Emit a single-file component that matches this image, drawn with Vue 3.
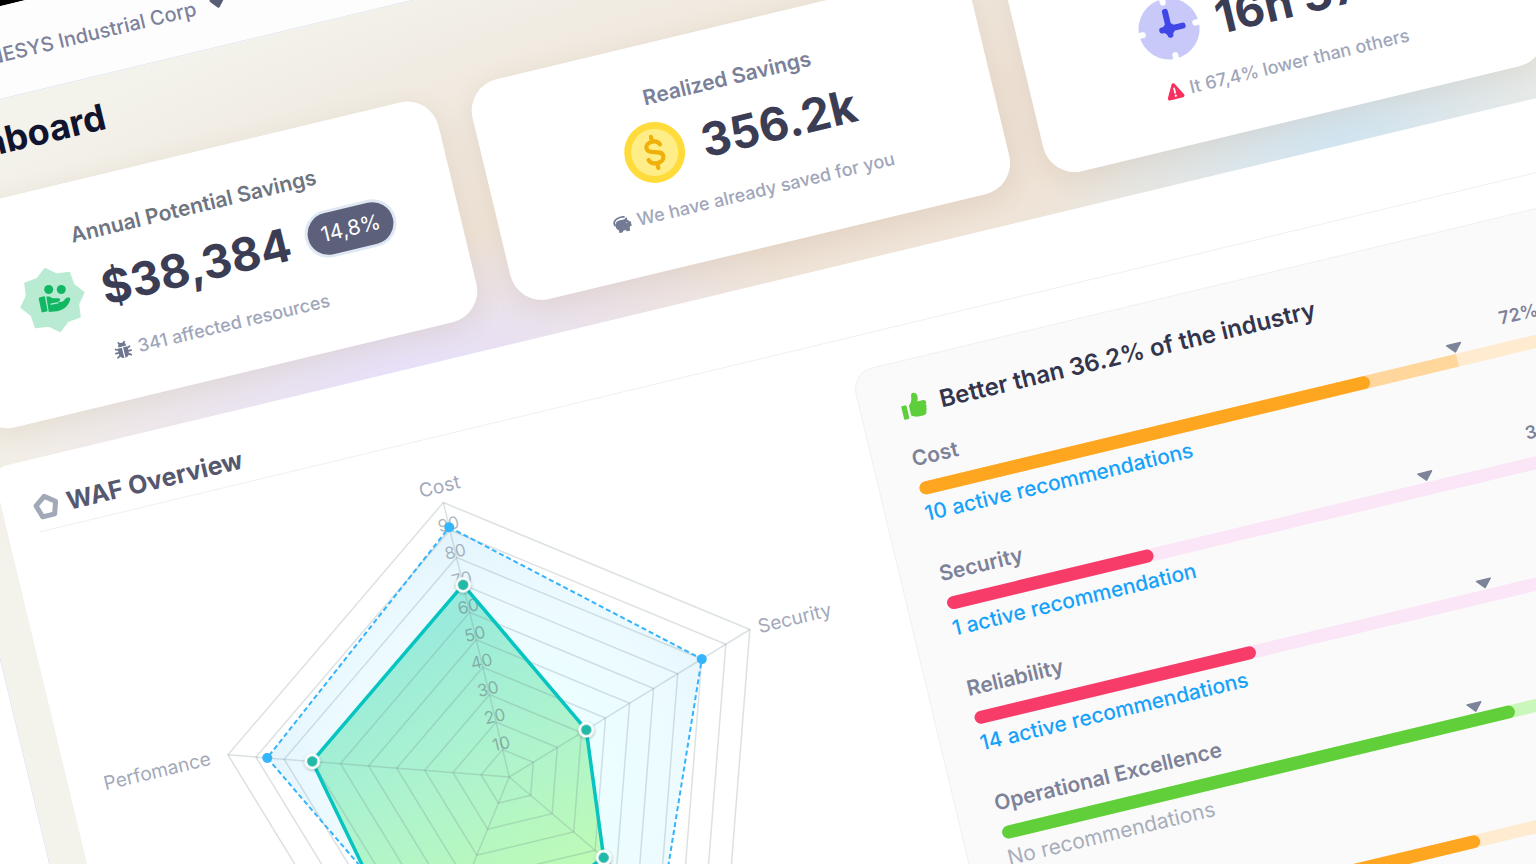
<script setup>
const cards = [
  { kind: 'star', title: 'Annual Potential Savings', value: '$38,384', pill: '14,8%', note: '341 affected resources', noteIcon: 'bug' },
  { kind: 'coin', title: 'Realized Savings', value: '356.2k', note: 'We have already saved for you', noteIcon: 'piggy' },
  { kind: 'clock', title: 'Average Response Time', value: '16h 37 m', note: 'It 67,4% lower than others', noteIcon: 'warning' },
]

const pillars = [
  { name: 'Cost', tone: 'orange', value: 72, average: 86, shade: true, note: '10 active recommendations' },
  { name: 'Security', tone: 'red', value: 33, average: 77, note: '1 active recommendation' },
  { name: 'Reliability', tone: 'red', value: 45, average: 82, note: '14 active recommendations' },
  { name: 'Operational Excellence', tone: 'green', value: 82, average: 76, note: '' },
  { name: 'Performance', tone: 'orange', value: 72, average: 86, note: '4 active recommendations' },
]

const cx = 398
const cy = 314
const radius = 281

function vertex(index, percent) {
  const angle = ((index * 72 - 90) * Math.PI) / 180
  const r = (radius * percent) / 100
  return [cx + r * Math.cos(angle), cy + r * Math.sin(angle)]
}

function polygon(values) {
  return values.map((v, i) => vertex(i, v).map((n) => n.toFixed(1)).join(',')).join(' ')
}

const levels = [10, 20, 30, 40, 50, 60, 70, 80, 90, 100]
const rings = levels.map((level) => polygon([level, level, level, level, level]))
const axes = [0, 1, 2, 3, 4].map((i) => vertex(i, 100))
const ticks = levels.slice(0, 9).map((level) => ({ level, y: cy - (radius * level) / 100 }))

const industry = [91, 80, 71, 68, 86]
const own = [70, 32, 44, 81, 70]
const industryDots = industry.map((v, i) => vertex(i, v))
const ownDots = own.map((v, i) => vertex(i, v))

const starPoints = Array.from({ length: 16 }, (_, i) => {
  const angle = ((i * 22.5 - 90) * Math.PI) / 180
  const r = i % 2 ? 26 : 32
  return `${(35 + r * Math.cos(angle)).toFixed(1)},${(35 + r * Math.sin(angle)).toFixed(1)}`
}).join(' ')
</script>

<template>
  <div class="stage">
    <div class="page">
      <header class="topbar">
        <button class="account" type="button">
          <span>GENESYS Industrial Corp</span>
          <svg width="16" height="12" viewBox="0 0 16 12" aria-hidden="true">
            <path d="M2 2h12L8 9z" fill="#595d78" stroke="#595d78" stroke-width="3" stroke-linejoin="round" />
          </svg>
        </button>
      </header>

      <div class="shell">
        <aside class="sidebar"></aside>

        <main class="main">
          <h1>Dashboard</h1>

          <section class="cards">
            <article v-for="card in cards" :key="card.title" class="card">
              <h2 :class="{ neutral: card.kind === 'star' }">{{ card.title }}</h2>

              <div class="figure">
                <svg v-if="card.kind === 'star'" class="star" viewBox="0 0 70 70" aria-hidden="true">
                  <polygon :points="starPoints" fill="#b9ebd3" stroke="#b9ebd3" stroke-width="2" stroke-linejoin="round" />
                  <g transform="translate(35 35) rotate(13.5)" fill="#12b763">
                    <circle cx="-3.8" cy="-10.5" r="4.500" />
                    <circle cx="8.800" cy="-10.500" r="4.500" />
                    <path d="M-13-2.500l4.300-1.200a1 1 0 0 1 1.200.8L-5 10.300a1 1 0 0 1-.8 1.200l-4 .8a1 1 0 0 1-1.200-.8L-13.800-1.300z" />
                    <path d="M-6.200-3.200C-4-4-2-3.400 0-1.900l6 .1c1.800.1 2.300 2.300.7 3L5 2.200l4.500-.6c1.500-.3 2-1.600 3.200-2.700 1.800-1.700 5.500-1.900 5.100.3C16.500 4.500 12.500 9.800 4.500 11.200L-3.700 11.900z" />
                    <path d="M-1.500 4 5.500 2.900" stroke="#b9ebd3" stroke-width="1.300" stroke-linecap="round" />
                  </g>
                </svg>
                <svg v-else-if="card.kind === 'coin'" class="round" viewBox="0 0 64 64" aria-hidden="true">
                  <circle cx="32" cy="32" r="30.500" fill="#ffdc3c" />
                  <circle cx="32" cy="32" r="23.500" fill="#ffee87" />
                  <path d="M39 25.500c-1-3-3.500-4.500-7-4.500-4.200 0-7 2-7 5.200 0 7.300 14.500 3.600 14.500 11.300 0 3.500-3 5.500-7.300 5.500-4 0-7-1.800-7.900-5M32 16v5M32 43v5" fill="none" stroke="#efb00a" stroke-width="4.200" stroke-linecap="round" />
                </svg>
                <svg v-else class="round" viewBox="0 0 64 64" aria-hidden="true">
                  <circle cx="32" cy="32" r="30.500" fill="#c8c9f9" />
                  <g fill="#ffffff">
                    <path d="M29 0h6v5a2.500 2.500 0 0 1-6 0z" />
                    <path d="M29 64h6v-5a2.500 2.500 0 0 0-6 0z" />
                    <path d="M0 29v6h5a2.500 2.500 0 0 0 0-6z" />
                    <path d="M64 29v6h-5a2.500 2.500 0 0 1 0-6z" />
                  </g>
                  <path d="M32 14.500V38M25 32h21" stroke="#4147e6" stroke-width="6" stroke-linecap="round" />
                  <circle cx="32" cy="32" r="6" fill="#4147e6" />
                </svg>

                <strong>{{ card.value }}</strong>
                <span v-if="card.pill" class="pill">{{ card.pill }}</span>
              </div>

              <p>
                <svg v-if="card.noteIcon === 'bug'" width="18" height="18" viewBox="0 0 18 18" aria-hidden="true">
                  <path d="M5 5.500h8v-.7a4 3.300 0 0 0-8 0z" fill="#6f7691" />
                  <path d="M4 6.500h4.400v10.700C5.500 16.800 4 14.800 4 12zM9.600 6.500H14V12c0 2.800-1.500 4.800-4.400 5.200z" fill="#6f7691" />
                  <path d="M6 1l1 1.500M12 1l-1 1.500M1.800 6.800 4.500 8.300M16.200 6.800 13.500 8.300M1.200 11H4.500M16.800 11H13.500M2.200 15.500l2.600-1.700M15.800 15.500l-2.600-1.700" stroke="#6f7691" stroke-width="1.700" stroke-linecap="round" />
                </svg>
                <svg v-else-if="card.noteIcon === 'piggy'" width="18" height="18" viewBox="0 0 18 18" aria-hidden="true">
                  <path d="M6.500 5.500H12l2.200-1.500v2.500C15 7 15.800 7.800 16.200 8.700h1V12.500h-1.400l-1.300 1.800V16.800h-2.800v-1.500H7.300v1.500H4.500v-2.600C3 13.200 2 11.700 2 10 2 7.500 4 5.500 6.500 5.500z" fill="#737a94" stroke="#737a94" stroke-linejoin="round" />
                  <path d="M1 8.500C.4 7 1.500 3.500 5.500 2.600S10.500 2.200 12 2.600" fill="none" stroke="#737a94" stroke-width="1.800" stroke-linecap="round" />
                  <circle cx="13.300" cy="8.800" r="0.700" fill="#c4c8d4" />
                </svg>
                <svg v-else width="18" height="18" viewBox="0 0 18 18" aria-hidden="true">
                  <path d="M9 2.500 15.800 15H2.200z" fill="#f8305e" stroke="#f8305e" stroke-width="3.500" stroke-linejoin="round" />
                  <path d="M9 6v4.500" stroke="#ffffff" stroke-width="1.800" stroke-linecap="round" />
                  <circle cx="9" cy="13.500" r="1.100" fill="#ffffff" />
                </svg>
                <span>{{ card.note }}</span>
              </p>
            </article>
          </section>

          <section class="panel">
            <h2 class="panel-title">
              <svg width="26" height="26" viewBox="0 0 26 26" aria-hidden="true">
                <path d="M13 3 23 10.400 19.200 22.500H6.800L3 10.400z" fill="none" stroke="#a1a9b7" stroke-width="5" stroke-linejoin="round" />
              </svg>
              <span>WAF Overview</span>
            </h2>

            <div class="panel-body">
              <svg class="radar" viewBox="0 0 796 640" role="img" aria-label="WAF Overview">
                <defs>
                  <radialGradient id="industryFill" gradientUnits="userSpaceOnUse" :cx="cx" :cy="cy" r="270">
                    <stop offset="0.350" stop-color="#ecfeff" />
                    <stop offset="0.650" stop-color="#edfbff" />
                    <stop offset="1" stop-color="#e0f2fc" />
                  </radialGradient>
                  <linearGradient id="ownFill" gradientUnits="userSpaceOnUse" x1="340" y1="117" x2="420" y2="440">
                    <stop offset="0" stop-color="#95e9df" />
                    <stop offset="0.550" stop-color="#aef3cd" />
                    <stop offset="1" stop-color="#bffcb4" />
                  </linearGradient>
                  <filter id="dotShadow" x="-50%" y="-50%" width="200%" height="200%">
                    <feDropShadow dx="0" dy="1" stdDeviation="1.500" flood-color="#1c4a4a" flood-opacity="0.450" />
                  </filter>
                </defs>

                <polygon :points="polygon(industry)" fill="url(#industryFill)" />
                <polygon :points="polygon(own)" fill="url(#ownFill)" />
                <g class="grid">
                  <polygon v-for="ring in rings" :key="ring" :points="ring" />
                  <line v-for="(end, i) in axes" :key="i" :x1="cx" :y1="cy" :x2="end[0]" :y2="end[1]" />
                </g>
                <g class="ticks">
                  <text v-for="tick in ticks" :key="tick.level" :x="cx" :y="tick.y">{{ tick.level }}</text>
                </g>

                <polygon class="industry" :points="polygon(industry)" />
                <polygon class="own" :points="polygon(own)" />
                <circle v-for="(dot, i) in industryDots" :key="`industry-${i}`" class="industry-dot" :cx="dot[0]" :cy="dot[1]" r="5" />
                <circle v-for="(dot, i) in ownDots" :key="`own-${i}`" class="own-dot" :cx="dot[0]" :cy="dot[1]" r="6.500" filter="url(#dotShadow)" />

                <g class="names">
                  <text x="398" y="23" text-anchor="middle">Cost</text>
                  <text x="674" y="233">Security</text>
                  <text x="113" y="233" text-anchor="end">Perfomance</text>
                  <text x="570" y="566">Reliability</text>
                  <text x="226" y="566" text-anchor="end">Operational</text>
                </g>
              </svg>

              <section class="compare">
                <h3>
                  <svg width="28" height="28" viewBox="0 0 28 28" aria-hidden="true">
                    <path d="M2.500 11.500h3a1.200 1.200 0 0 1 1.200 1.200v11.600a1.200 1.200 0 0 1-1.200 1.200h-3a1.200 1.200 0 0 1-1.200-1.200V12.700a1.200 1.200 0 0 1 1.200-1.200z" fill="#5fce3b" />
                    <path d="M9 12.800c2.600-2.200 4-4.600 4.300-8C13.500 2 14.500 1 16 1c2.300 0 3.600 1.800 3.600 4.400 0 2-.6 3.500-1.300 5.100h5.800c1.600 0 2.600 1.200 2.600 2.600 0 .9-.4 1.600-.9 2 .6.8.7 2.300-.3 3.300.4 1 .1 2.300-.7 3 .2 2.700-1.300 4.100-4.200 4.100h-3.700c-3.200 0-5.200-1-7.900-2.700z" fill="#5fce3b" />
                  </svg>
                  <span>Better than 36.2% of the industry</span>
                </h3>

                <div v-for="item in pillars" :key="item.name" class="pillar">
                  <div class="pillar-head">
                    <span>{{ item.name }}</span>
                    <span class="percent">{{ item.value }}%</span>
                  </div>
                  <div class="track" :class="item.tone" role="progressbar" :aria-label="item.name" :aria-valuenow="item.value" aria-valuemin="0" aria-valuemax="100">
                    <div v-if="item.shade" class="shade" :style="{ width: `${item.average}%` }"></div>
                    <div class="fill" :style="{ width: `${item.value}%` }"></div>
                    <svg class="marker" :style="{ left: `${item.average}%` }" width="18" height="12" viewBox="0 0 18 12" aria-hidden="true">
                      <path d="M2 2h14L9 10z" fill="#7d8499" stroke="#7d8499" stroke-width="1.500" stroke-linejoin="round" />
                    </svg>
                  </div>
                  <a v-if="item.note" href="#">{{ item.note }}</a>
                  <span v-else class="none">No recommendations</span>
                </div>
              </section>
            </div>
          </section>
        </main>
      </div>
    </div>
  </div>
</template>

<style>
body {
  margin: 0;
  background: #000000;
}
</style>

<style scoped>
.stage {
  height: 100vh;
  overflow: hidden;
  background: #000000;
  font-family: Inter, "Open Sans", sans-serif;
}

.page {
  width: calc(100% + 214px);
  margin: 6px 0 0 -220px;
  background: #ffffff;
  transform: rotate(-13.5deg);
  transform-origin: 220px -6px;
}

.topbar {
  display: flex;
  align-items: center;
  height: 90px;
  padding-left: 168px;
  border-bottom: 1px solid #e3e7ef;
  background: #fefdfd;
}

.account {
  display: flex;
  align-items: center;
  gap: 14px;
  padding: 6px 0 0;
  border: 0;
  background: none;
  color: #7d829c;
  font: 500 20px/28px Inter, "Open Sans", sans-serif;
}

.shell {
  display: flex;
}

.sidebar {
  flex: 0 0 67px;
  box-sizing: border-box;
  border-right: 1px solid #e1e5f0;
  background: #ffffff;
}

.main {
  flex: 1;
  min-width: 0;
  padding: 16px 36px 60px;
  background:
    radial-gradient(400px 130px at 455px 366px, #e6dffa 0%, rgba(230, 223, 250, 0) 100%),
    radial-gradient(300px 120px at 1424px 352px, #d0e4f0 0%, rgba(208, 228, 240, 0) 100%),
    radial-gradient(1100px 300px at 900px 260px, #ecdccd 0%, rgba(236, 220, 205, 0) 100%),
    #f3f2eb;
}

h1 {
  margin: 0 0 32px;
  color: #11142f;
  font-size: 36px;
  font-weight: 700;
  line-height: 48px;
}

.cards {
  display: grid;
  grid-template-columns: repeat(3, 1fr);
  gap: 35px;
}

.card {
  display: flex;
  flex-direction: column;
  align-items: center;
  padding: 39px 20px 36px;
  border-radius: 32px;
  background: #ffffff;
  box-shadow: 0 6px 26px rgba(120, 90, 60, 0.1);
}

.card h2 {
  margin: 0;
  color: #7b8099;
  font-size: 21px;
  font-weight: 600;
  line-height: 28px;
}

.card h2.neutral {
  color: #6f757f;
}

.figure {
  display: flex;
  align-items: center;
  gap: 16px;
  margin: 9px 0 16px;
}

.star {
  width: 70px;
  height: 70px;
}

.round {
  width: 64px;
  height: 64px;
}

.figure strong {
  color: #3b3d54;
  font-size: 46px;
  font-weight: 700;
  line-height: 60px;
}

.pill {
  padding: 6px 13px;
  border: 3px solid #e0e8f4;
  border-radius: 27px;
  background: #5c607a;
  color: #ffffff;
  font-size: 21px;
  line-height: 30px;
}

.card p {
  display: flex;
  align-items: center;
  gap: 6px;
  margin: 0;
  color: #a0a6b9;
  font-size: 18px;
  font-weight: 500;
  line-height: 28px;
}

.panel {
  margin-top: 35px;
  padding: 31px 31px 36px;
  border-radius: 14px;
  background: #ffffff;
}

.panel-title {
  display: flex;
  align-items: center;
  gap: 8px;
  margin: 0 0 32px;
  padding-bottom: 5px;
  border-bottom: 1px solid #eef0f2;
  color: #55586f;
  font-size: 25px;
  font-weight: 700;
  line-height: 36px;
}

.panel-body {
  display: grid;
  grid-template-columns: 21fr 19fr;
  align-items: start;
  gap: 26px;
}

.radar {
  display: block;
  width: 100%;
  height: auto;
}

.grid {
  fill: none;
  stroke: rgba(110, 130, 140, 0.24);
  stroke-width: 1.5;
}

.ticks {
  fill: rgba(100, 110, 120, 0.5);
  font-size: 17px;
  text-anchor: middle;
}

.names {
  fill: #a3a8b9;
  font-size: 19px;
}

.industry {
  fill: none;
  stroke: #35b4fb;
  stroke-width: 2;
  stroke-dasharray: 5 3;
}

.own {
  fill: none;
  stroke: #06c4c0;
  stroke-width: 3.5;
  stroke-linejoin: round;
}

.industry-dot {
  fill: #35b6fb;
}

.own-dot {
  fill: #22b9a8;
  stroke: #ffffff;
  stroke-width: 2.5;
}

.compare {
  box-sizing: border-box;
  margin-top: 2px;
  padding: 30px 39px 36px;
  border: 1px solid #eff0f7;
  border-radius: 22px;
  background: #fafafa;
}

.compare h3 {
  display: flex;
  align-items: center;
  gap: 13px;
  margin: 0 0 22px;
  color: #33354d;
  font-size: 24px;
  font-weight: 600;
  line-height: 32px;
}

.pillar + .pillar {
  margin-top: 34px;
}

.pillar-head {
  display: flex;
  justify-content: space-between;
  margin-bottom: 10px;
  color: #7d8299;
  font-size: 21px;
  font-weight: 600;
  line-height: 28px;
}

.percent {
  font-size: 18px;
}

.track {
  position: relative;
  height: 13px;
  margin-bottom: 5px;
  border-radius: 7px;
}

.shade,
.fill {
  position: absolute;
  top: 0;
  left: 0;
  height: 100%;
}

.fill {
  border-radius: 7px;
}

.marker {
  position: absolute;
  bottom: 13px;
  margin-left: -9px;
}

.orange {
  background: #feebd0;
}

.orange .shade {
  border-radius: 7px 0 0 7px;
  background: #ffd69b;
}

.orange .fill {
  background: #ffa621;
}

.red {
  background: #fae6f6;
}

.red .fill {
  background: #f83c69;
}

.green {
  background: #c9f8ba;
}

.green .fill {
  background: #60cf3a;
}

.pillar a,
.none {
  display: block;
  color: #17a2fa;
  font-size: 21px;
  font-weight: 500;
  line-height: 28px;
  text-decoration: none;
}

.none {
  color: #a8adba;
  font-weight: 400;
}
</style>
